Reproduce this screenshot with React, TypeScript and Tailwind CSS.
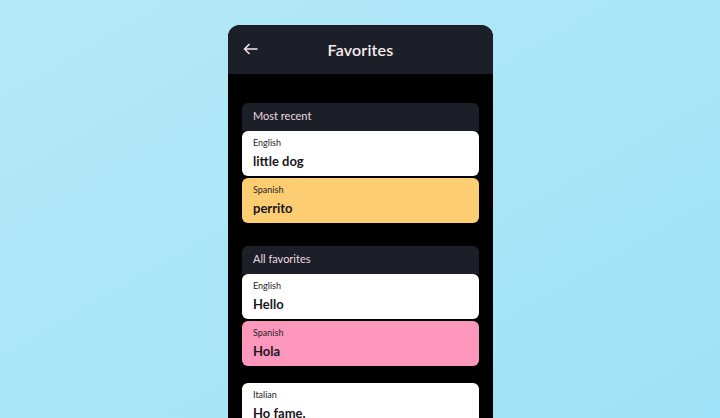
import React from "react";

type Entry = { lang: string; word: string; bg: string };

const sections: { title?: string; entries: Entry[] }[] = [
  {
    title: "Most recent",
    entries: [
      { lang: "English", word: "little dog", bg: "bg-white" },
      { lang: "Spanish", word: "perrito", bg: "bg-[#fdcd72]" },
    ],
  },
  {
    title: "All favorites",
    entries: [
      { lang: "English", word: "Hello", bg: "bg-white" },
      { lang: "Spanish", word: "Hola", bg: "bg-[#fd97bc]" },
    ],
  },
  {
    entries: [{ lang: "Italian", word: "Ho fame.", bg: "bg-white" }],
  },
];

const Card = ({ entry }: { entry: Entry }) => (
  <div className={`${entry.bg} rounded-md h-[45px] px-[11px] pt-[6px]`}>
    <div className="text-[9px] leading-[12px] text-[#2a2228]">{entry.lang}</div>
    <div className="text-[13px] leading-[16px] font-bold text-[#1a1620] mt-[4px]">{entry.word}</div>
  </div>
);

export default function App() {
  return (
    <div
      className="w-[720px] h-[418px] overflow-hidden bg-gradient-to-br from-[#b4e9f7] to-[#a0e2f7] flex justify-center pt-[25px]"
      style={{ fontFamily: "Lato, 'Noto Sans', sans-serif" }}
    >
      <div className="w-[265px] h-[420px] rounded-t-[12px] overflow-hidden bg-black flex flex-col ml-[1px]">
        {/* header */}
        <div className="h-[49px] bg-[#1d1f28] flex items-center relative shrink-0">
          <svg
            className="absolute left-[15px] top-[18px]"
            width="15"
            height="12"
            viewBox="0 0 15 12"
            fill="none"
            stroke="#f3e6ea"
            strokeWidth="1.6"
            strokeLinecap="round"
            strokeLinejoin="round"
          >
            <path d="M14 6H1.5M6 1.5L1.5 6L6 10.5" />
          </svg>
          <div className="w-full text-center text-[16px] font-semibold text-[#f4ecef] tracking-[0.2px]">
            Favorites
          </div>
        </div>

        {/* list */}
        <div className="px-[14px] pt-[29px] flex flex-col gap-[23px]">
          {sections.map((s, i) => (
            <div key={i} className={`flex flex-col gap-[2px] ${s.title ? "" : "-mt-[6px]"}`}>
              {s.title && (
                <div className="h-[28px] bg-[#1d1f28] rounded-t-md px-[11px] flex items-center text-[11px] text-[#ecd9e0] -mb-[2px] pb-[1px]">
                  {s.title}
                </div>
              )}
              {s.entries.map((e, j) => (
                <Card key={j} entry={e} />
              ))}
            </div>
          ))}
        </div>
      </div>
    </div>
  );
}
